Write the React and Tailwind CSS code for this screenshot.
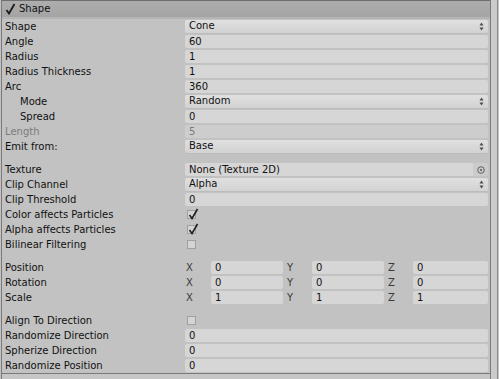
import React from "react";

const font = { fontFamily: '"DejaVu Sans", Verdana, sans-serif' };

function Arrows() {
  return (
    <svg width="5" height="9" viewBox="0 0 5 9" className="shrink-0">
      <path d="M2.5 0.5 L4.5 3.5 L0.5 3.5 Z" fill="#4a4a4a" />
      <path d="M2.5 8.5 L4.5 5.5 L0.5 5.5 Z" fill="#4a4a4a" />
    </svg>
  );
}

function Check() {
  return (
    <svg width="11" height="12" viewBox="0 0 11 12" className="absolute left-[0px] top-[-3px]">
      <path d="M1.5 7 L4 10.5 L9.5 1" fill="none" stroke="#1e1e1e" strokeWidth="1.6" />
    </svg>
  );
}

function Row({ label, indent, disabled, children }) {
  return (
    <div className="h-[15px] flex items-start">
      <div
        className={`w-[183px] h-[15px] flex items-center ${indent ? "pl-[18px]" : "pl-[3px]"} ${
          disabled ? "text-[#7c7c7c]" : "text-[#111]"
        }`}
      >
        {label}
      </div>
      <div className="w-[303px] h-[13px] mt-[1px] flex items-center">{children}</div>
    </div>
  );
}

function Text({ value, disabled }) {
  return (
    <div
      className={`w-full h-[13px] flex items-center pl-[4px] rounded-[2px] ${
        disabled ? "bg-[#cdcdcd] text-[#7c7c7c]" : "bg-[#d6d6d6] text-[#111]"
      }`}
    >
      {value}
    </div>
  );
}

function Dropdown({ value }) {
  return (
    <div className="w-full h-[14px] flex items-center justify-between pl-[4px] pr-[4px] rounded-[2px] bg-gradient-to-b from-[#e0e0e0] to-[#d2d2d2] border-b border-[#bcbcbc] text-[#111]">
      <span>{value}</span>
      <Arrows />
    </div>
  );
}

function Toggle({ on }) {
  return (
    <div className="relative w-[9px] h-[9px] ml-[2px] bg-[#d4d4d4] border border-[#a0a0a0]">
      {on && <Check />}
    </div>
  );
}

function Vector({ x, y, z }) {
  const part = (axis, v, last) => (
    <div className={`flex items-center ${last ? "w-[101px]" : "w-[101px] pr-[3px]"}`}>
      <span className="w-[26px] pl-[1px] text-[#3a3a3a]">{axis}</span>
      <div className="flex-1 h-[13px] flex items-center pl-[4px] bg-[#d6d6d6] rounded-[2px] text-[#111]">{v}</div>
    </div>
  );
  return (
    <div className="w-full flex">
      {part("X", x)}
      {part("Y", y)}
      {part("Z", z, true)}
    </div>
  );
}

const Spacer = () => <div className="h-[8px]" />;

export default function App() {
  return (
    <div className="w-[499px] h-[379px] bg-[#c2c2c2] overflow-hidden flex text-[10px] leading-none" style={font}>
      <div className="ml-[1px] w-[490px] h-[379px] border-l border-r border-[#7a7a7a] flex flex-col">
        {/* header */}
        <div className="h-[19px] border-t border-[#6e6e6e] flex flex-col">
          <div className="h-[16px] bg-gradient-to-b from-[#adadad] to-[#a4a4a4] flex items-center pl-[3px] gap-[3px] text-[#111]">
            <svg width="11" height="12" viewBox="0 0 11 12">
              <path d="M1.5 7 L4 10.5 L9.5 1" fill="none" stroke="#1a1a1a" strokeWidth="1.8" />
            </svg>
            <span>Shape</span>
          </div>
          <div className="h-[2px] bg-[#b4b4b4]" />
        </div>

        <Row label="Shape"><Dropdown value="Cone" /></Row>
        <Row label="Angle"><Text value="60" /></Row>
        <Row label="Radius"><Text value="1" /></Row>
        <Row label="Radius Thickness"><Text value="1" /></Row>
        <Row label="Arc"><Text value="360" /></Row>
        <Row label="Mode" indent><Dropdown value="Random" /></Row>
        <Row label="Spread" indent><Text value="0" /></Row>
        <Row label="Length" disabled><Text value="5" disabled /></Row>
        <Row label="Emit from:"><Dropdown value="Base" /></Row>
        <Spacer />
        <Row label="Texture">
          <div className="w-full h-[13px] flex rounded-[2px] overflow-hidden">
            <div className="flex-1 flex items-center pl-[4px] bg-[#d6d6d6] text-[#111]">None (Texture 2D)</div>
            <div className="w-[15px] flex items-center justify-center bg-[#cbcbcb]">
              <svg width="8" height="8" viewBox="0 0 8 8">
                <circle cx="4" cy="4" r="3.3" fill="none" stroke="#555" strokeWidth="0.9" />
                <circle cx="4" cy="4" r="1" fill="#555" />
              </svg>
            </div>
          </div>
        </Row>
        <Row label="Clip Channel"><Dropdown value="Alpha" /></Row>
        <Row label="Clip Threshold"><Text value="0" /></Row>
        <Row label="Color affects Particles"><Toggle on /></Row>
        <Row label="Alpha affects Particles"><Toggle on /></Row>
        <Row label="Bilinear Filtering"><Toggle /></Row>
        <Spacer />
        <Row label="Position"><Vector x="0" y="0" z="0" /></Row>
        <Row label="Rotation"><Vector x="0" y="0" z="0" /></Row>
        <Row label="Scale"><Vector x="1" y="1" z="1" /></Row>
        <Spacer />
        <Row label="Align To Direction"><Toggle /></Row>
        <Row label="Randomize Direction"><Text value="0" /></Row>
        <Row label="Spherize Direction"><Text value="0" /></Row>
        <Row label="Randomize Position"><Text value="0" /></Row>
        <div className="h-[1px] bg-[#7a7a7a]" />
        <div className="flex-1 bg-[#c6c6c6]" />
      </div>
      {/* scrollbar edge */}
      <div className="flex h-[379px]">
        <div className="w-[6px] bg-[#cbcbcb]" />
        <div className="w-[1px] bg-[#8c8c8c]" />
        <div className="w-[1px] bg-[#c2c2c2]" />
      </div>
    </div>
  );
}
